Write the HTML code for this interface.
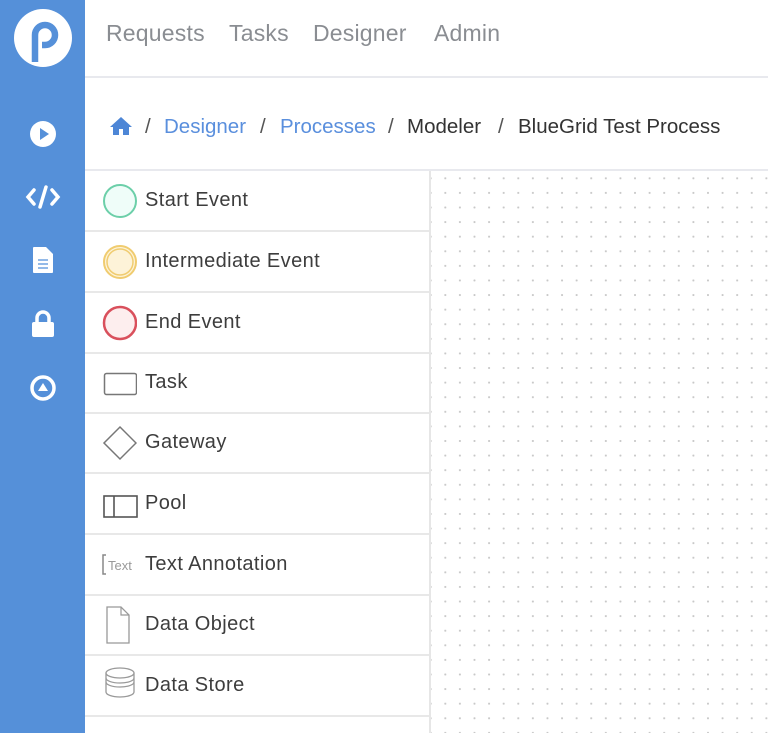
<!DOCTYPE html>
<html><head><style>
*{margin:0;padding:0;box-sizing:border-box}
body{width:768px;height:733px;overflow:hidden;background:#fff;font-family:"Liberation Sans",sans-serif;position:relative}
#sb{position:absolute;left:0;top:0;width:85px;height:733px;background:#5590d9}
.ic{position:absolute;left:0;width:85px;display:flex;justify-content:center}
#nav{position:absolute;left:85px;top:0;right:0;height:78px;border-bottom:2px solid #e8e9ee}
#nav span{position:absolute;top:20px;font-size:23px;color:#8a8d92;letter-spacing:0.2px}
#bc{position:absolute;left:85px;top:78px;right:0;height:93px;border-bottom:2px solid #e8e9ee;font-size:20.5px;color:#333}
#bc span{position:absolute;top:37px}
.b{color:#5a8fdd}
#pal{position:absolute;left:85px;top:171px;width:346px;height:562px;border-right:2px solid #e6e6e6}
.row{position:absolute;left:0;width:344px;height:61px;border-bottom:2px solid #e8e8e8}
.row .t{position:absolute;left:60px;top:18px;font-size:20px;color:#3d3d3d;letter-spacing:0.4px}
.row svg{position:absolute;left:16px;top:12px}
#cv{position:absolute;left:431px;top:172px;right:0;bottom:0;background-image:radial-gradient(circle,#c8c8c8 0.9px,transparent 1.2px);background-size:14.6px 14.6px;background-position:7px -1px}
</style></head><body>
<div id="sb">
 <div class="ic" style="top:8px"><svg width="60" height="60" viewBox="0 0 60 60"><circle cx="30" cy="30" r="29" fill="#fff"/><path d="M22 54 V27 a10 10 0 1 1 10 10 h-3" stroke="#5590d9" stroke-width="6.5" fill="none"/></svg></div>
 <div class="ic" style="top:120px"><svg width="28" height="28"><circle cx="14" cy="14" r="13" fill="#fff"/><path d="M11 8 L20 14 L11 20Z" fill="#5590d9"/></svg></div>
 <div class="ic" style="top:184px"><svg width="36" height="26"><path d="M9 6 L3 13 L9 20 M27 6 L33 13 L27 20 M21 3 L15 23" stroke="#fff" stroke-width="3.5" fill="none" stroke-linecap="round"/></svg></div>
 <div class="ic" style="top:246px"><svg width="22" height="28"><path d="M1 2 a1 1 0 0 1 1-1 H14 L21 8 V26 a1 1 0 0 1-1 1 H2 a1 1 0 0 1-1-1Z" fill="#fff"/><path d="M6 14h10M6 18h10M6 22h10" stroke="#5590d9" stroke-width="1.3"/></svg></div>
 <div class="ic" style="top:309px"><svg width="26" height="30"><path d="M7 14 V9 a6 6 0 0 1 12 0 V14" stroke="#fff" stroke-width="3.5" fill="none"/><rect x="2" y="13" width="22" height="15" rx="2" fill="#fff"/></svg></div>
 <div class="ic" style="top:374px"><svg width="28" height="28"><circle cx="14" cy="14" r="11" stroke="#fff" stroke-width="3.5" fill="none"/><path d="M14 9 L19 17 H9Z" fill="#fff"/></svg></div>
</div>
<div id="nav"><span style="left:21px">Requests</span><span style="left:144px">Tasks</span><span style="left:228px">Designer</span><span style="left:349px">Admin</span></div>
<div id="bc">
 <svg style="position:absolute;left:24px;top:38px" width="24" height="20" viewBox="0 0 24 20"><path d="M12 1 L1 11 H4 V19 H10 V13 H14 V19 H20 V11 H23Z" fill="#4d86d6"/></svg>
 <span style="left:60px;color:#555">/</span><span class="b" style="left:79px">Designer</span><span style="left:175px;color:#555">/</span><span class="b" style="left:195px">Processes</span><span style="left:303px;color:#555">/</span><span style="left:322px">Modeler</span><span style="left:413px;color:#555">/</span><span style="left:433px">BlueGrid Test Process</span>
</div>
<div id="pal">
 <div class="row" style="top:0"><svg width="36" height="36"><circle cx="19" cy="18" r="16" fill="#effdf9" stroke="#6ccfa9" stroke-width="2"/></svg><div class="t">Start Event</div></div>
 <div class="row" style="top:61px"><svg width="36" height="36"><circle cx="19" cy="18" r="16" fill="#fdf3d8" stroke="#f0cc70" stroke-width="2"/><circle cx="19" cy="18" r="13" fill="none" stroke="#f0cc70" stroke-width="1.5"/></svg><div class="t">Intermediate Event</div></div>
 <div class="row" style="top:122px"><svg width="36" height="36"><circle cx="19" cy="18" r="16" fill="#fdeeee" stroke="#d9505c" stroke-width="2.5"/></svg><div class="t">End Event</div></div>
 <div class="row" style="top:182px"><svg width="36" height="36"><rect x="3.5" y="8.5" width="32" height="21" rx="2" fill="#fff" stroke="#777" stroke-width="1.5"/></svg><div class="t">Task</div></div>
 <div class="row" style="top:242px"><svg width="36" height="40"><path d="M19 2 L35 18 L19 34 L3 18Z" fill="#fff" stroke="#777" stroke-width="1.5"/></svg><div class="t">Gateway</div></div>
 <div class="row" style="top:303px"><svg width="40" height="36"><rect x="3" y="10" width="33" height="21" fill="#fff" stroke="#555" stroke-width="1.6"/><path d="M13 10 V31" stroke="#555" stroke-width="1.6"/></svg><div class="t">Pool</div></div>
 <div class="row" style="top:364px"><svg width="40" height="36" style="left:16px;top:16px"><path d="M5 4 H2 V23 H5" stroke="#888" stroke-width="1.5" fill="none"/><text x="7" y="19" font-family="Liberation Sans" font-size="13" fill="#999">Text</text></svg><div class="t">Text Annotation</div></div>
 <div class="row" style="top:424px"><svg width="36" height="40" style="top:10px"><path d="M6 2 H20 L28 10 V38 H6Z" fill="#fff" stroke="#999" stroke-width="1.3"/><path d="M20 2 V10 H28" stroke="#999" stroke-width="1.2" fill="none"/></svg><div class="t">Data Object</div></div>
 <div class="row" style="top:485px"><svg width="36" height="36" style="top:10px"><path d="M5 7 V26 a14 5 0 0 0 28 0 V7" fill="#fff" stroke="#999" stroke-width="1.3"/><ellipse cx="19" cy="7" rx="14" ry="5" fill="#fff" stroke="#999" stroke-width="1.3"/><path d="M5 12 a14 5 0 0 0 28 0 M5 16 a14 5 0 0 0 28 0" stroke="#999" stroke-width="1.2" fill="none"/></svg><div class="t">Data Store</div></div>
</div>
<div id="cv"></div>
</body></html>
